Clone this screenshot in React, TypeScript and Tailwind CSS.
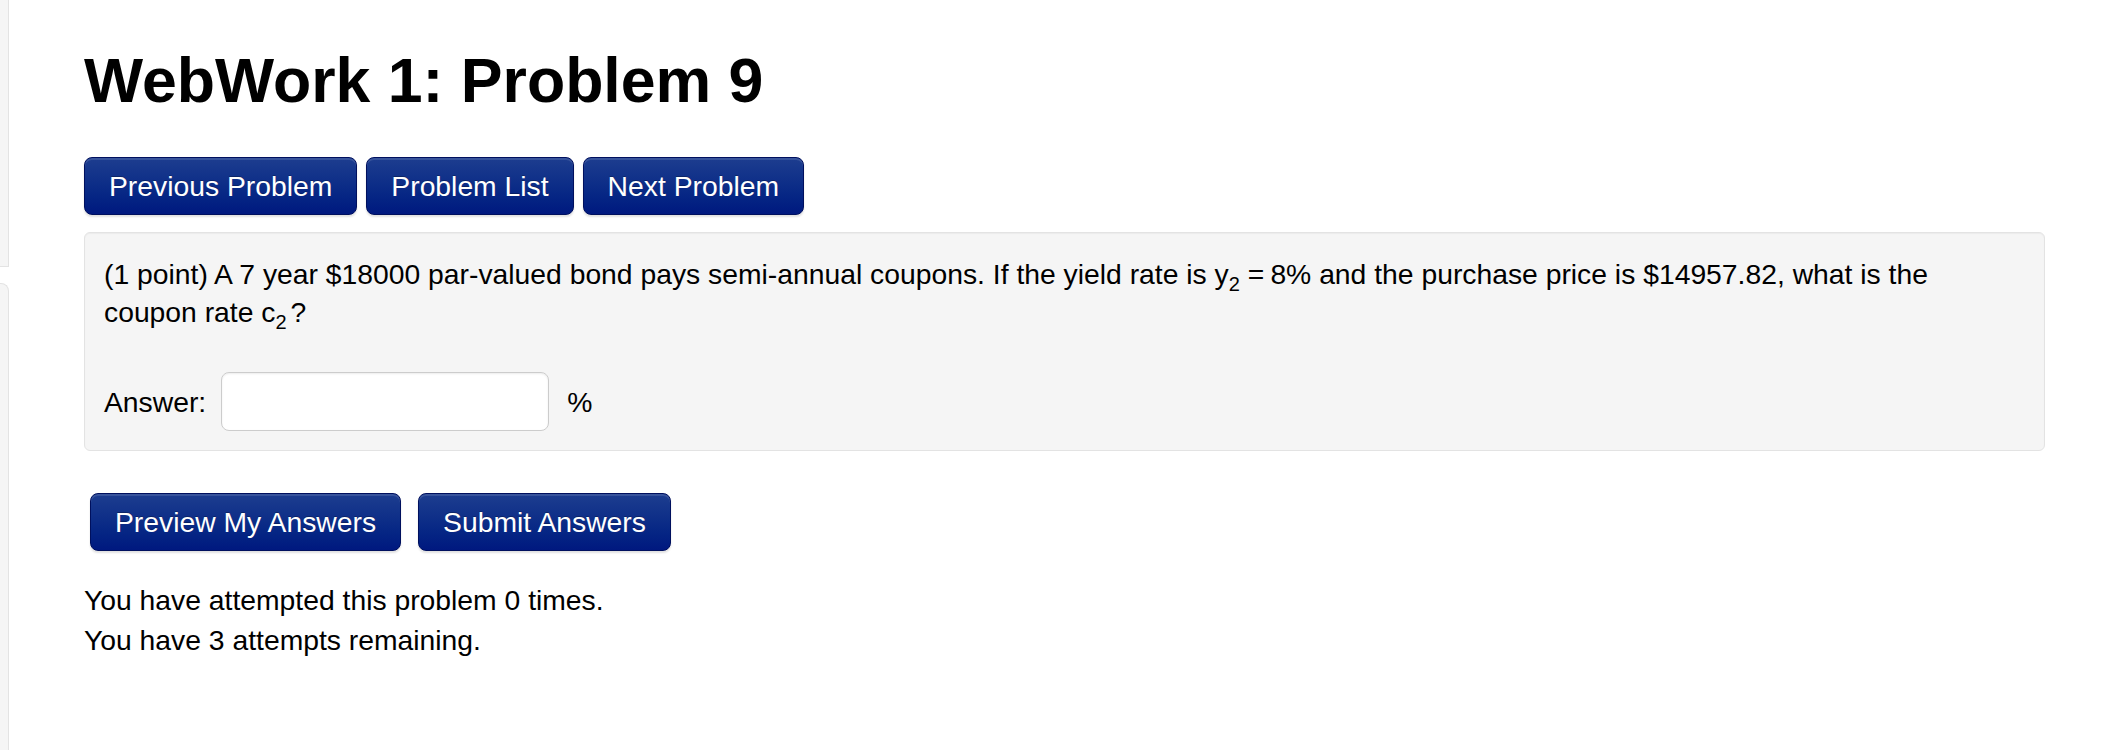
const font = { fontFamily: '"Liberation Sans", Arial, Helvetica, sans-serif' };

function NavyButton({ label }: { label: string }) {
  return (
    <button
      type="button"
      className="rounded-[8px] border border-[#00105e] bg-gradient-to-b from-[#1d3d8f] to-[#00187f] px-6 py-2 text-[28.3px] leading-[40px] text-white shadow-[inset_0_2px_0_rgba(255,255,255,0.12),0_2px_2px_rgba(0,0,0,0.12)] [text-shadow:0_-1px_0_rgba(0,0,0,0.25)]"
    >
      {label}
    </button>
  );
}

function Sub({ children }: { children: React.ReactNode }) {
  return <span className="relative top-[7px] text-[20px] leading-none">{children}</span>;
}

export default function App() {
  return (
    <div className="flex min-h-[750px] bg-white text-black" style={font}>
      {/* clipped sidebar panels */}
      <aside className="flex w-[9px] shrink-0 flex-col">
        <div className="h-[267px] border-r border-b border-[#e3e3e3] bg-[#f5f5f5]" />
        <div className="mt-[16px] flex-1 rounded-tr-[8px] border-t border-r border-[#e3e3e3] bg-[#f5f5f5]" />
      </aside>

      <main className="flex-1 pt-[46px] pl-[75px] pr-[71px]">
        <h1 className="text-[62.6px] leading-[68px] font-bold">WebWork 1: Problem 9</h1>

        <div className="mt-[43px] flex gap-[9px]">
          <NavyButton label="Previous Problem" />
          <NavyButton label="Problem List" />
          <NavyButton label="Next Problem" />
        </div>

        <div className="mt-[17px] rounded-[6px] border border-[#e3e3e3] bg-[#f5f5f5] px-[19px] pt-[22px] pb-[19px] shadow-[inset_0_1px_1px_rgba(0,0,0,0.04)]">
          <p className="text-[28.3px] leading-[38px]">
            (1 point) A 7 year $18000 par-valued bond pays semi-annual coupons. If the yield rate is y
            <Sub>2</Sub>
            <span className="ml-[8px] mr-[6px]">=</span>8% and the purchase price is $14957.82, what is the
            <br />
            coupon rate c<Sub>2</Sub>
            <span className="ml-[4px]">?</span>
          </p>

          <div className="mt-[41px] flex items-center text-[28.3px] leading-[38px]">
            <span>Answer:</span>
            <input
              type="text"
              className="ml-[15px] h-[59px] w-[328px] rounded-[8px] border border-[#cccccc] bg-white px-3 shadow-[inset_0_1px_2px_rgba(0,0,0,0.08)] outline-none"
            />
            <span className="ml-[18px]">%</span>
          </div>
        </div>

        <div className="mt-[42px] ml-[6px] flex gap-[17px]">
          <NavyButton label="Preview My Answers" />
          <NavyButton label="Submit Answers" />
        </div>

        <div className="mt-[29px] text-[28.3px] leading-[40px]">
          <p>You have attempted this problem 0 times.</p>
          <p>You have 3 attempts remaining.</p>
        </div>
      </main>
    </div>
  );
}
